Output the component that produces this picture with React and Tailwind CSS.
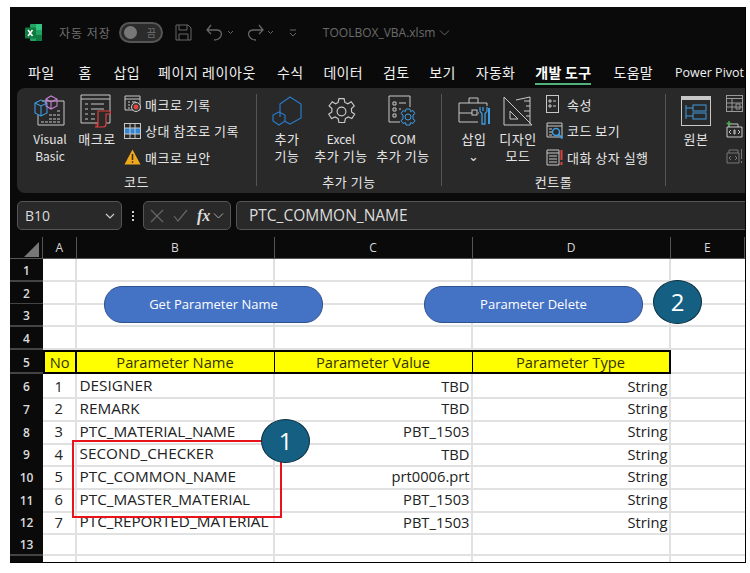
const KR = { fontFamily: '"Noto Sans CJK KR","Noto Sans",sans-serif' };
const SH = { fontFamily: '"Open Sans","Noto Sans",sans-serif' };

const g = '#c8c8c8';
const VB = () => (
  <svg width="34" height="32" viewBox="0 0 34 32" fill="none">
    <path d="M9 6H31V30H5V20" stroke={g} />
    <path d="M16 20h12M16 24h12M8 27h20M24 16h4" stroke={g} strokeDasharray="3 1" />
    <path d="M2 8l6-3 6 3v10l-6 3-6-3zM2 8l6 3 6-3M8 11v10" stroke="#3f9be0" strokeWidth="1.1" />
    <path d="M13 4l5-3 6 3v7l-6 3-5-3zM13 4l5 3 6-3M18 7v7" stroke="#c77fd6" strokeWidth="1.1" />
  </svg>
);
const Macro = () => (
  <svg width="34" height="34" viewBox="0 0 34 34" fill="none">
    <path d="M1 1H30V29H1zM1 5H30" stroke={g} />
    <path d="M5 10h3M11 10h13M5 15h3M11 15h13M5 20h3M11 20h4M5 25h3M11 25h4" stroke={g} />
    <path d="M18 17h11c2 0 2 3 0 3h-3v10c0 2-1 3-3 3h-8c2 0 3-1 3-3H15h3V17z" stroke="#e0403c" strokeWidth="1.2" fill="#292929" />
  </svg>
);
const Record = () => (
  <svg width="18" height="18" viewBox="0 0 18 18" fill="none">
    <path d="M1 1H16V15H1zM1 4H16M4 7h2M8 7h4M4 10h2M4 13h2" stroke={g} />
    <circle cx="12" cy="12" r="4.5" fill="#3a3a3a" stroke={g} />
    <circle cx="12" cy="12" r="2.4" fill="#e8403a" />
  </svg>
);
const Rel = () => (
  <svg width="17" height="16" viewBox="0 0 17 16">
    <rect x="0.5" y="0.5" width="16" height="15" fill="#292929" stroke={g} />
    <rect x="1" y="5" width="15" height="6" fill="#2f86d6" />
    <path d="M6 0v16M11 0v16M0 5h17M0 11h17" stroke={g} />
  </svg>
);
const Warn = () => (
  <svg width="17" height="16" viewBox="0 0 17 16">
    <path d="M8.5 0.5L16.5 15.5H0.5z" fill="#f0a81e" />
    <path d="M8.5 5v6M8.5 12.3v1.5" stroke="#3a2a00" strokeWidth="1.5" />
  </svg>
);
const Hex = () => (
  <svg width="31" height="30" viewBox="0 0 31 30" fill="none" stroke="#2a78c8" strokeWidth="1.2">
    <path d="M8 21V8L18 1l11 7v14l-11 6-6-3" />
    <path d="M7 16l6 3v6l-6 4-6-4v-6z" />
  </svg>
);
const Gear = () => (
  <svg width="31" height="31" viewBox="0 0 24 24" fill="none" stroke={g} strokeWidth="0.9">
    <circle cx="12" cy="12" r="3.4" />
    <path d="M10 2h4l.6 3 2.3 1 2.6-1.6 2.4 3.3-2.2 2 .1 2.6 2.4 1.8-2.2 3.4-2.8-1.3-2.2 1.3-.6 3H10l-.6-3-2.3-1.3-2.8 1.3-2.2-3.4 2.4-1.8.1-2.6-2.2-2 2.4-3.3 2.6 1.6L9.400 5z" />
  </svg>
);
const Com = () => (
  <svg width="30" height="32" viewBox="0 0 30 32" fill="none">
    <path d="M1 1H22V12M12 27H1V1" stroke={g} />
    <path d="M5 7h3v3H5zM5 13h3v3H5zM5 19h3v3H5zM11 8h7M11 14h2" stroke={g} />
    <path d="M18 14h4l.5 2.500 2.500-1 2 3-2 1.500v4l2 1.500-2 3-2.500-1-.5 2.500h-4l-.5-2.500-2.500 1-2-3 2-1.500v-4l-2-1.500 2-3 2.500 1z" stroke="#3f9be0" fill="#292929" />
    <circle cx="20" cy="22" r="3" stroke="#3f9be0" />
  </svg>
);
const Toolbox = () => (
  <svg width="32" height="28" viewBox="0 0 32 28" fill="none">
    <path d="M1 6H29V9M1 6V25H20M1 16H14M11 6V1H20V6M20 16H21" stroke={g} />
    <rect x="14" y="13" width="5" height="5" stroke={g} />
    <path d="M22 10v4c0 1 2 2 2 3v10h3V17c0-1 2-2 2-3v-4M25 10v4" stroke="#3f9be0" strokeWidth="1.3" />
    <path d="M31 11v16" stroke="#3f9be0" strokeWidth="2" />
  </svg>
);
const Ruler = () => (
  <svg width="30" height="30" viewBox="0 0 30 30" fill="none" stroke={g}>
    <path d="M1 1L29 29H1zM7 15L15 23H7z" />
    <path d="M13 4L27 1V28" />
    <path d="M21 5h6M23 10h4M21 15h6M23 20h4" />
  </svg>
);
const Prop = () => (
  <svg width="13" height="18" viewBox="0 0 13 18" fill="none" stroke={g}>
    <rect x="0.5" y="0.5" width="12" height="17" />
    <path d="M3 5h2v2H3zM3 10h2v2H3zM7 6h3M7 11h3" />
  </svg>
);
const Code = () => (
  <svg width="18" height="18" viewBox="0 0 18 18" fill="none">
    <path d="M1 1H16V15H1zM1 4H16" stroke={g} />
    <circle cx="10" cy="10" r="3.500" stroke="#3f9be0" strokeWidth="1.5" />
    <path d="M12.500 12.500L16.500 16.500" stroke="#3f9be0" strokeWidth="2" />
    <path d="M3 7h3M3 10h3M3 13h3" stroke={g} />
  </svg>
);
const Dlg = () => (
  <svg width="17" height="17" viewBox="0 0 17 17" fill="none">
    <path d="M1 1H13V16H1zM1 4H13M3 7h8M3 10h8M3 13h8" stroke={g} />
    <path d="M15.500 1v10" stroke="#e0403c" strokeWidth="2" />
    <path d="M15.500 13v3" stroke="#e0403c" strokeWidth="2" />
  </svg>
);
const Source = () => (
  <svg width="30" height="30" viewBox="0 0 30 30" fill="none">
    <rect x="0.500" y="0.500" width="29" height="29" stroke={g} />
    <path d="M1 2.500H29" stroke={g} strokeWidth="3" />
    <path d="M5 9v14M5 12h7M5 20h7" stroke="#3f9be0" />
    <rect x="12" y="9" width="13" height="6" stroke="#3f9be0" />
    <rect x="12" y="17" width="13" height="6" stroke="#3f9be0" />
  </svg>
);
const S1 = () => (
  <svg width="17" height="17" viewBox="0 0 17 17" fill="none" stroke="#9a9a9a">
    <rect x="0.500" y="0.500" width="16" height="16" />
    <path d="M1 3.500H16M6 4v12M1 8h15M1 12h15M10 9h4v5h-4z" />
  </svg>
);
const S2 = () => (
  <svg width="17" height="17" viewBox="0 0 17 17" fill="none" stroke={g}>
    <path d="M1 6H16V16H1zM3 6V3h9v3" />
    <path d="M5 9l-2 2 2 2M12 9l2 2-2 2M8 9h1v4H8z" />
    <path d="M3 0v5M0.500 2.500h5" stroke="#4caf50" strokeWidth="1.4" />
  </svg>
);
const S3 = () => (
  <svg width="17" height="17" viewBox="0 0 17 17" fill="none" stroke="#777">
    <path d="M1 6H13V16H1zM3 6V3h9v3M15.500 2v10M15.500 14v2" />
    <path d="M5 9l-2 2 2 2M9 9l2 2-2 2" />
  </svg>
);

const Big = ({ icon, lines, w }) => (
  <div className={`flex flex-col items-center shrink-0 ${w}`}>
    <div className="h-[38px] flex items-center justify-center">{icon}</div>
    <div className="mt-[1px] flex flex-col items-center leading-[16.500px] text-[#e6e6e6] whitespace-nowrap">
      {lines.map((l, i) => (
        <span key={i} className={/[A-Za-z]/.test(l) ? 'text-[12px]' : 'text-[13px] tracking-[0.5px]'}>{l}</span>
      ))}
    </div>
  </div>
);
const Small = ({ icon, text }) => (
  <div className="h-[26.500px] flex items-center whitespace-nowrap text-[13px] tracking-[0.5px] text-[#e6e6e6]">
    <span className="w-[21px] flex items-center shrink-0">{icon}</span>
    {text}
  </div>
);
const Label = ({ children }) => (
  <div className="absolute bottom-[3px] left-0 right-0 text-center text-[13px] tracking-[0.5px] leading-[16px] text-[#e6e6e6]">{children}</div>
);
const Sep = () => <div className="w-px h-[92px] mt-[6px] bg-[#555] shrink-0" />;

const rows = [
  ['1', 'DESIGNER', 'TBD'],
  ['2', 'REMARK', 'TBD'],
  ['3', 'PTC_MATERIAL_NAME', 'PBT_1503'],
  ['4', 'SECOND_CHECKER', 'TBD'],
  ['5', 'PTC_COMMON_NAME', 'prt0006.prt'],
  ['6', 'PTC_MASTER_MATERIAL', 'PBT_1503'],
  ['7', 'PTC_REPORTED_MATERIAL', 'PBT_1503'],
];
const Cols = 'grid grid-cols-[33px_33.500px_198px_198px_198px_1fr]';
const RowHead = ({ n }) => (
  <div className="flex items-center justify-center pt-[3px] bg-[#0a0a0a] text-[#dcdcdc] text-[12px] font-semibold border-b-2 border-[#444]">{n}</div>
);
const Cell = ({ children, cls = '' }) => (
  <div className={`border-r-2 border-b-2 border-[#e1e1e1] flex items-center text-[#222] whitespace-nowrap ${cls}`}>{children}</div>
);
const Empty = ({ n, h }) => (
  <div className={`${Cols} ${h}`}>
    <RowHead n={n} />
    <Cell />
    <Cell />
    <Cell />
    <Cell />
    <div className="border-b-2 border-[#e1e1e1]" />
  </div>
);
const Pill = ({ children, cls }) => (
  <div className={`absolute top-[27px] w-[219px] h-[37px] rounded-[18px] bg-[#4472c4] border border-[#2f528f] flex items-center justify-center text-white text-[13px] font-medium ${cls}`}>{children}</div>
);
const Badge = ({ children, cls }) => (
  <div className={`absolute w-[49px] h-[44px] rounded-[50%] bg-[#156082] border border-[#0b2f40] flex items-center justify-center text-white text-[24px] ${cls}`}>{children}</div>
);

export default function App() {
  return (
    <div className="w-[750px] h-[573px] bg-white pt-[7px] pl-[10px] overflow-hidden" style={KR}>
      <div className="w-[736px] h-[556px] bg-[#0a0a0a] flex flex-col overflow-hidden border-r border-b border-black">
        <div className="h-[50px] shrink-0 flex items-center pl-[15px] pt-[1px]">
          <svg width="17" height="17" viewBox="0 0 17 17">
            <rect x="5" y="0" width="12" height="17" rx="1" fill="#21a366" />
            <rect x="11" y="0" width="6" height="6" fill="#33c481" />
            <rect x="11" y="11" width="6" height="6" fill="#107c41" />
            <rect x="0" y="3.500" width="11" height="11" rx="1" fill="#107c41" />
            <path d="M3 6l4.500 6M7.500 6L3 12" stroke="#fff" strokeWidth="1.500" />
          </svg>
          <span className="ml-[17px] text-[12px] text-[#707070] tracking-[1px] whitespace-nowrap">자동 저장</span>
          <div className="ml-[8px] w-[44px] h-[21px] rounded-full border-2 border-[#555] bg-[#2b2b2b] flex items-center pl-[3px] pr-[5px] justify-between">
            <span className="w-[13px] h-[13px] rounded-full bg-[#777]" />
            <span className="text-[10px] text-[#707070]">끔</span>
          </div>
          <svg className="ml-[12px]" width="17" height="17" viewBox="0 0 17 17" fill="none" stroke="#666">
            <path d="M1 1H13L16 4V16H1zM4 1V6H12V1M4 16V10H13V16" />
          </svg>
          <svg className="ml-[14px]" width="18" height="17" viewBox="0 0 18 17" fill="none" stroke="#666" strokeWidth="1.300">
            <path d="M1 6H11C15 6 16 9 15 12C14 14 11 16 8 16M5 1L1 6L5 10" />
          </svg>
          <svg className="ml-[2px]" width="9" height="9" viewBox="0 0 9 9" fill="none" stroke="#666"><path d="M2 3l2.500 2.500L7 3" /></svg>
          <svg className="ml-[11px]" width="18" height="17" viewBox="0 0 18 17" fill="none" stroke="#666" strokeWidth="1.300">
            <path d="M17 6H7C3 6 2 9 3 12C4 14 7 16 10 16M13 1L17 6L13 10" />
          </svg>
          <svg className="ml-[2px]" width="9" height="9" viewBox="0 0 9 9" fill="none" stroke="#666"><path d="M2 3l2.500 2.500L7 3" /></svg>
          <svg className="ml-[13px]" width="10" height="10" viewBox="0 0 10 10" fill="none" stroke="#666"><path d="M2 2h6M2 5l3 3 3-3" /></svg>
          <span className="ml-[25px] text-[12px] text-[#6a6a6a] whitespace-nowrap" style={SH}>TOOLBOX_VBA.xlsm</span>
          <svg className="ml-[4px]" width="11" height="11" viewBox="0 0 11 11" fill="none" stroke="#666"><path d="M1 3.500l4.500 4.500L10 3.500" /></svg>
        </div>

        <div className="h-[31px] shrink-0 flex items-start pl-[18px] pt-[6px] text-[14px] tracking-[0.3px] leading-[19px] text-[#f0f0f0] whitespace-nowrap overflow-hidden">
          <span>파일</span>
          <span className="ml-[24px]">홈</span>
          <span className="ml-[22px]">삽입</span>
          <span className="ml-[18px] tracking-[0.6px]">페이지 레이아웃</span>
          <span className="ml-[21px]">수식</span>
          <span className="ml-[20px]">데이터</span>
          <span className="ml-[20px]">검토</span>
          <span className="ml-[20px]">보기</span>
          <span className="ml-[20px]">자동화</span>
          <span className="ml-[20px] relative font-bold text-white">
            개발 도구
            <span className="absolute left-0 right-0 -bottom-[3px] h-[2px] bg-[#4fb27a]" />
          </span>
          <span className="ml-[22px]">도움말</span>
          <span className="ml-[22px] text-[12.500px] tracking-normal" style={SH}>Power Pivot</span>
        </div>

        <div className="ml-[7px] w-[728px] h-[105px] shrink-0 bg-[#292929] rounded-l-[8px] flex overflow-hidden">
          <div className="relative w-[239px] shrink-0 flex pl-[8px] pt-[4px]">
            <Big w="w-[50px]" icon={<VB />} lines={['Visual', 'Basic']} />
            <Big w="w-[44px]" icon={<Macro />} lines={['매크로']} />
            <div className="ml-[5px] -mt-[1px]">
              <Small icon={<Record />} text="매크로 기록" />
              <Small icon={<Rel />} text="상대 참조로 기록" />
              <Small icon={<Warn />} text="매크로 보안" />
            </div>
            <Label>코드</Label>
          </div>
          <Sep />
          <div className="relative w-[184px] shrink-0 flex pl-[7px] pt-[4px]">
            <Big w="w-[46px]" icon={<Hex />} lines={['추가', '기능']} />
            <Big w="w-[62px]" icon={<Gear />} lines={['Excel', '추가 기능']} />
            <Big w="w-[62px]" icon={<Com />} lines={['COM', '추가 기능']} />
            <Label>추가 기능</Label>
          </div>
          <Sep />
          <div className="relative w-[223px] shrink-0 flex pl-[10px] pt-[4px]">
            <Big w="w-[44px]" icon={<Toolbox />} lines={['삽입', '⌄']} />
            <Big w="w-[44px]" icon={<Ruler />} lines={['디자인', '모드']} />
            <div className="ml-[6px] -mt-[1px]">
              <Small icon={<Prop />} text="속성" />
              <Small icon={<Code />} text="코드 보기" />
              <Small icon={<Dlg />} text="대화 상자 실행" />
            </div>
            <Label>컨트롤</Label>
          </div>
          <Sep />
          <div className="flex pl-[8px] pt-[4px]">
            <Big w="w-[44px]" icon={<Source />} lines={['원본']} />
            <div className="ml-[8px] pt-[3px] flex flex-col gap-[9px]">
              <S1 />
              <S2 />
              <S3 />
            </div>
          </div>
        </div>

        <div className="mt-[8px] ml-[7px] h-[29px] shrink-0 flex items-stretch text-[#dcdcdc]">
          <div className="w-[105px] rounded-[5px] border border-[#555] bg-[#292929] flex items-center justify-between pl-[7px] pr-[5px] text-[14px]" style={SH}>
            B10
            <svg width="12" height="12" viewBox="0 0 12 12" fill="none" stroke="#ccc" strokeWidth="1.200"><path d="M2 4l4 4 4-4" /></svg>
          </div>
          <div className="w-[21px] flex flex-col items-center justify-center gap-[2px]">
            <span className="w-[2px] h-[2px] bg-[#ccc]" />
            <span className="w-[2px] h-[2px] bg-[#ccc]" />
            <span className="w-[2px] h-[2px] bg-[#ccc]" />
          </div>
          <div className="w-[88px] rounded-[5px] border border-[#555] bg-[#292929] flex items-center pl-[6px] gap-[9px]">
            <svg width="14" height="14" viewBox="0 0 14 14" fill="none" stroke="#666" strokeWidth="1.200"><path d="M1 1l12 12M13 1L1 13" /></svg>
            <svg width="15" height="13" viewBox="0 0 15 13" fill="none" stroke="#666" strokeWidth="1.200"><path d="M1 7l4 5L14 1" /></svg>
            <span className="text-[16px] italic font-bold text-[#ddd] leading-none" style={{ fontFamily: '"Liberation Serif",serif' }}>fx</span>
            <svg className="-ml-[6px]" width="11" height="11" viewBox="0 0 11 11" fill="none" stroke="#aaa"><path d="M1 3.500l4.500 4.500L10 3.500" /></svg>
          </div>
          <div className="ml-[5px] flex-1 rounded-l-[5px] border border-r-0 border-[#555] bg-[#292929] flex items-center pl-[12px] text-[15.500px]" style={SH}>PTC_COMMON_NAME</div>
        </div>

        <div className={`${Cols} mt-[7px] h-[22px] shrink-0 text-[12px] text-[#d8d8d8] border-b border-[#555]`} style={SH}>
          <div className="relative border-r border-[#555]">
            <svg className="absolute right-[3px] bottom-[1px]" width="15" height="15" viewBox="0 0 15 15"><path d="M15 0V15H0z" fill="#777" /></svg>
          </div>
          {['A', 'B', 'C', 'D', 'E'].map((c) => (
            <div key={c} className="border-r border-[#555] flex items-center justify-center">{c}</div>
          ))}
        </div>

        <div className="relative flex-1 bg-white overflow-hidden" style={SH}>
          <Empty n="1" h="h-[22.700px]" />
          <Empty n="2" h="h-[22.700px]" />
          <Empty n="3" h="h-[22.700px]" />
          <Empty n="4" h="h-[22.700px]" />
          <div className={`${Cols} h-[24.500px] text-[14.700px] leading-[16px]`}>
            <RowHead n="5" />
            <Cell cls="bg-[#ffff00] justify-center pb-[1px] !border-black !border-y-2 border-l-2 !text-[#333300]">No</Cell>
            <Cell cls="bg-[#ffff00] justify-center pb-[1px] !border-black !border-y-2 !border-r !text-[#333300]">Parameter Name</Cell>
            <Cell cls="bg-[#ffff00] justify-center pb-[1px] !border-black !border-y-2 !border-r !text-[#333300]">Parameter Value</Cell>
            <Cell cls="bg-[#ffff00] justify-center pb-[1px] !border-black !border-y-2 !text-[#333300]">Parameter Type</Cell>
            <div className="border-b-2 border-[#e1e1e1]" />
          </div>
          {rows.map((r, i) => (
            <div key={r[0]} className={`${Cols} h-[22.700px] text-[14.700px]`}>
              <RowHead n={String(6 + i)} />
              <Cell cls="justify-center">{r[0]}</Cell>
              <Cell cls="pl-[3px] text-[15.300px]">{r[1]}</Cell>
              <Cell cls="justify-end pr-[1px]">{r[2]}</Cell>
              <Cell cls="justify-end pr-[1px]">String</Cell>
              <div className="border-b-2 border-[#e1e1e1]" />
            </div>
          ))}
          <Empty n="13" h="h-[22.700px]" />
          <div className={`${Cols} h-[8px]`}>
            <div className="bg-[#0a0a0a]" />
            <div className="border-r-2 border-[#e1e1e1]" />
            <div className="border-r-2 border-[#e1e1e1]" />
            <div className="border-r-2 border-[#e1e1e1]" />
            <div className="border-r-2 border-[#e1e1e1]" />
          </div>

          <Pill cls="left-[94px]">Get Parameter Name</Pill>
          <Pill cls="left-[414px]">Parameter Delete</Pill>
          <Badge cls="left-[643px] top-[21px]">2</Badge>
          <div className="absolute left-[62px] top-[181px] w-[210px] h-[78px] border-2 border-[#e8131b]" />
          <Badge cls="left-[251px] top-[160px]">1</Badge>
        </div>
      </div>
    </div>
  );
}
